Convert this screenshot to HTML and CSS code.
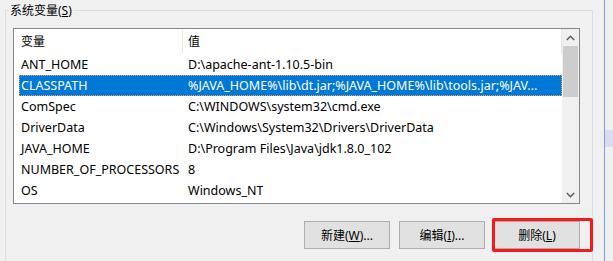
FILE: index.html
```html
<!DOCTYPE html>
<html lang="zh-CN">
<head>
  <meta charset="UTF-8">
  <title>系统变量</title>
  <link rel="stylesheet" href="styles.css">
</head>
<body>
  <div class="dialog">
    <div class="group">
      <div class="legend">系统变量(<u>S</u>)</div>
      <div class="list">
        <div class="rows">
          <div class="header">
            <div class="col1">变量</div>
            <div class="col2">值</div>
          </div>
          <div class="row"><div class="col1">ANT_HOME</div><div class="col2">D:\apache-ant-1.10.5-bin</div></div>
          <div class="row selected"><div class="col1">CLASSPATH</div><div class="col2">%JAVA_HOME%\lib\dt.jar;%JAVA_HOME%\lib\tools.jar;%JAV...</div></div>
          <div class="row"><div class="col1">ComSpec</div><div class="col2">C:\WINDOWS\system32\cmd.exe</div></div>
          <div class="row"><div class="col1">DriverData</div><div class="col2">C:\Windows\System32\Drivers\DriverData</div></div>
          <div class="row"><div class="col1">JAVA_HOME</div><div class="col2">D:\Program Files\Java\jdk1.8.0_102</div></div>
          <div class="row"><div class="col1">NUMBER_OF_PROCESSORS</div><div class="col2">8</div></div>
          <div class="row"><div class="col1">OS</div><div class="col2">Windows_NT</div></div>
        </div>
        <div class="scrollbar">
          <div class="arrow">
            <svg width="9" height="6" viewBox="0 0 9 6"><polyline points="0.8,5 4.5,1.3 8.2,5" fill="none" stroke="#606060" stroke-width="1.6"/></svg>
          </div>
          <div class="thumb"></div>
          <div class="track"></div>
          <div class="arrow">
            <svg width="9" height="6" viewBox="0 0 9 6"><polyline points="0.8,1 4.5,4.7 8.2,1" fill="none" stroke="#606060" stroke-width="1.6"/></svg>
          </div>
        </div>
      </div>
      <div class="buttons">
        <button class="btn">新建(<u>W</u>)...</button>
        <button class="btn">编辑(<u>I</u>)...</button>
        <span class="marked"><button class="btn">删除(<u>L</u>)</button></span>
      </div>
    </div>
  </div>
  <div class="edge">
    <div class="edge-block"></div>
  </div>
</body>
</html>
```

FILE: styles.css
```css
body {
  margin: 0;
  width: 613px;
  height: 261px;
  overflow: hidden;
  display: flex;
  background: #f0f0f0;
  font-family: "Noto Sans", "Noto Sans CJK SC", sans-serif;
  font-size: 12.5px;
  color: #000;
}
.dialog {
  width: 604px;
  flex: none;
}
.group {
  margin: 10px 0 0 5px;
  width: 588px;
  height: 260px;
  box-sizing: border-box;
  border: 1px solid #dcdcdc;
  border-bottom: none;
}
.legend {
  width: fit-content;
  margin: -8px 0 0 3px;
  padding: 0 1px;
  height: 16px;
  line-height: 16px;
  font-size: 12px;
  background: #f0f0f0;
}
.list {
  margin: 9px 0 0 7px;
  width: 567px;
  height: 176px;
  box-sizing: border-box;
  border: 1px solid #828790;
  background: #fff;
  display: flex;
}
.rows {
  flex: 1;
  padding-left: 5px;
}
.header, .row {
  display: flex;
  white-space: nowrap;
}
.header {
  height: 25px;
  line-height: 25px;
  font-size: 12px;
  border-right: 1px solid #e5e5e5;
}
.header .col1 {
  border-right: 1px solid #e5e5e5;
  margin: 1px 0;
  line-height: 23px;
}
.row {
  height: 21px;
  line-height: 21px;
}
.col1 {
  width: 161px;
  padding-left: 2px;
  flex: none;
}
.col2 {
  padding-left: 5px;
  overflow: hidden;
}
.row .col2 {
  padding-left: 6px;
}
.selected {
  background: #0078d7;
  color: #fff;
  outline: 1px dotted #f5a040;
  outline-offset: -1px;
}
.scrollbar {
  width: 17px;
  display: flex;
  flex-direction: column;
  background: #f0f0f0;
}
.arrow {
  height: 17px;
  display: flex;
  align-items: center;
  justify-content: center;
}
.thumb {
  height: 51px;
  margin: 0 1px;
  background: #cdcdcd;
}
.track { flex: 1; }
.buttons {
  display: flex;
  justify-content: flex-end;
  gap: 9px;
  margin: 17px 12px 0 0;
}
.btn {
  width: 86px;
  height: 28px;
  padding: 0;
  background: #e1e1e1;
  border: 1px solid #adadad;
  font-family: "Noto Sans", "Noto Sans CJK SC", sans-serif;
  font-size: 12px;
  color: #000;
}
.marked {
  position: relative;
  display: flex;
}
.marked::after {
  content: "";
  position: absolute;
  left: -2px;
  top: -3px;
  right: -13px;
  bottom: -3px;
  border: 3px solid #f5191c;
  border-radius: 2px;
}
.edge {
  flex: 1;
  border-left: 1px solid #6ea5df;
}
.edge-block {
  margin-top: 130px;
  height: 17px;
  background: #dadaf0;
}
```
